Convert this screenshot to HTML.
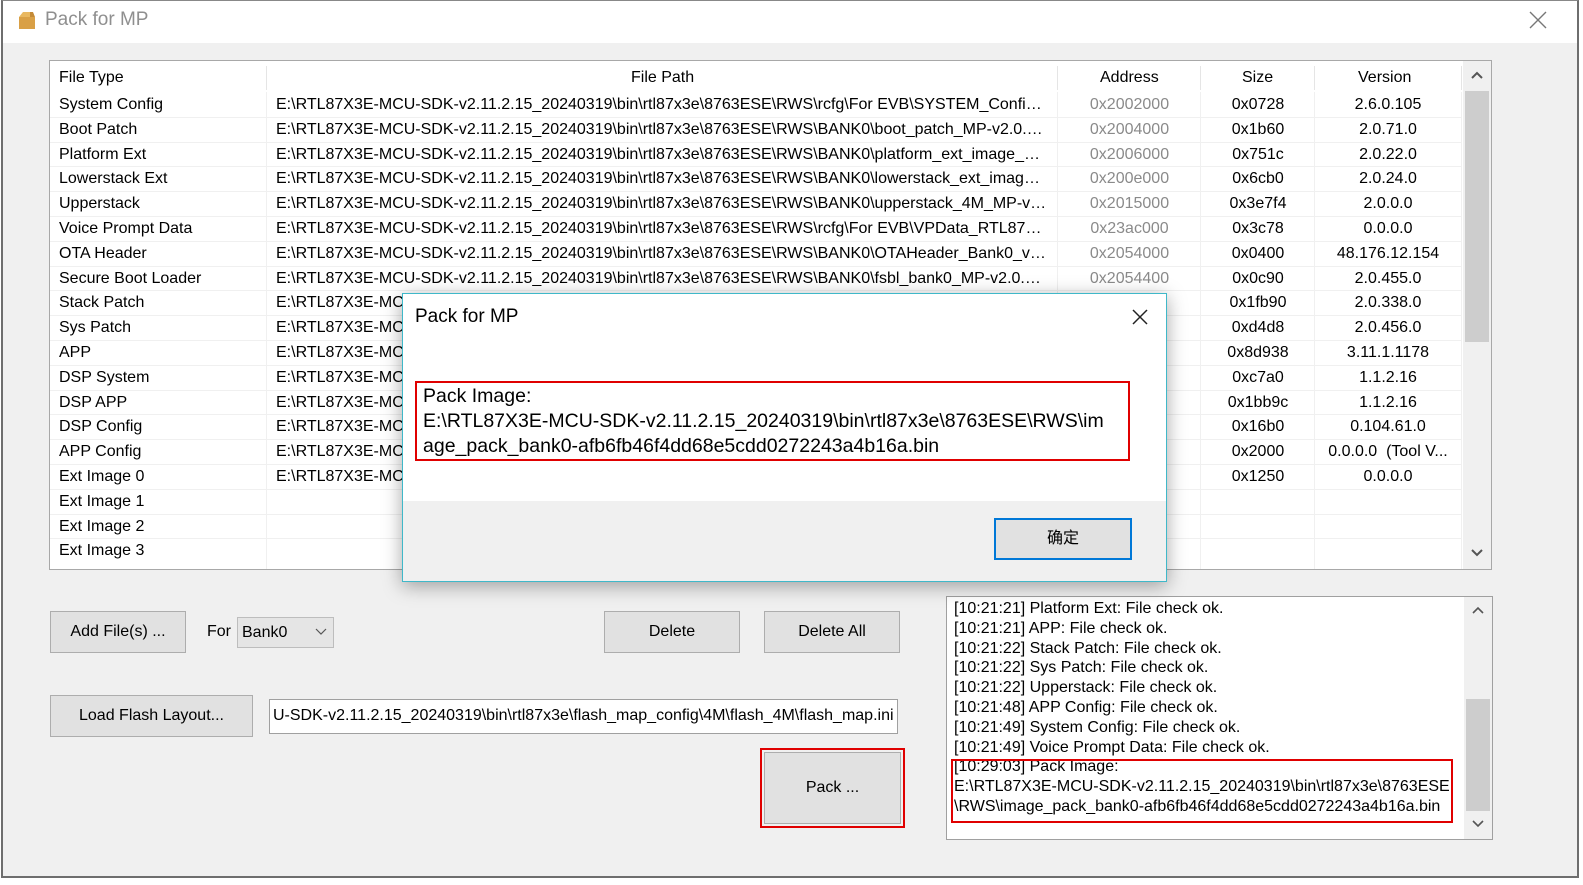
<!DOCTYPE html>
<html style="width:1583px;height:885px;overflow:hidden"><head><meta charset="utf-8"><style>
*{margin:0;padding:0;box-sizing:border-box}
body{width:1583px;height:885px;background:#fff;position:relative;overflow:hidden;font-family:"Liberation Sans","Noto Sans CJK SC",sans-serif;font-size:16px;color:#000}
.a{position:absolute}
#win{left:1px;top:0;width:1578px;height:878px;border:2px solid #6e6e6e;border-top:1px solid #888;background:#f0f0f0;overflow:hidden}
#title{left:0;top:0;width:1574px;height:42px;background:#fff}
.row{position:absolute;left:0;height:24.8px;width:1412px;border-bottom:1px solid #f0f0f0;line-height:24px;white-space:nowrap;overflow:hidden}
.row span{position:absolute;top:0;overflow:hidden;text-overflow:ellipsis}
.c1{left:9px;width:205px}.c2{left:226px;width:772px}.c3{left:1008px;width:143px;text-align:center;color:#8a8a8a}.c4{left:1151px;width:114px;text-align:center}.c5{left:1265px;width:146px;text-align:center}
.btn{position:absolute;background:#e1e1e1;border:1px solid #adadad;text-align:center;font-size:16px}
.log div{height:19.8px;line-height:19.8px;white-space:nowrap}
</style></head><body>
<div id="win" class="a">
 <div id="title" class="a"></div>
</div>
<svg class="a" style="left:17px;top:10px" width="20" height="20" viewBox="0 0 20 20"><path d="M2 7 L18 7 L18 19 L2 19Z" fill="#d9a046"/><path d="M2 7 L6 2 L13 2 L13 7Z" fill="#e9b860"/><path d="M13 2 L16 2 L18 7 L13 7Z" fill="#c48a36"/></svg>
<div class="a" style="left:45px;top:9px;font-size:19px;color:#8f8f8f">Pack for MP</div>
<svg class="a" style="left:1529px;top:11px" width="18" height="18"><path d="M1 1L17 17M17 1L1 17" stroke="#777" stroke-width="1.4"/></svg>

<div class="a" style="left:49px;top:60px;width:1443px;height:510px;border:1px solid #a8a8a8;background:#fff;overflow:hidden">
 <div class="a" style="left:0;top:5px;width:1412px;height:26px;line-height:24px">
  <span class="a" style="left:9px">File Type</span>
  <span class="a" style="left:216px;top:0;height:24px;border-left:1px solid #e5e5e5"></span>
  <span class="a" style="left:581px">File Path</span>
  <span class="a" style="left:1007px;top:0;height:24px;border-left:1px solid #e5e5e5"></span>
  <span class="a" style="left:1050px">Address</span>
  <span class="a" style="left:1150px;top:0;height:24px;border-left:1px solid #e5e5e5"></span>
  <span class="a" style="left:1192px">Size</span>
  <span class="a" style="left:1264px;top:0;height:24px;border-left:1px solid #e5e5e5"></span>
  <span class="a" style="left:1308px">Version</span>
  <span class="a" style="left:1411px;top:0;height:24px;border-left:1px solid #e5e5e5"></span>
 </div>
 <div class="a" style="left:216px;top:31px;height:478px;border-left:1px solid #f0f0f0"></div>
 <div class="a" style="left:1007px;top:31px;height:478px;border-left:1px solid #f0f0f0"></div>
 <div class="a" style="left:1150px;top:31px;height:478px;border-left:1px solid #f0f0f0"></div>
 <div class="a" style="left:1264px;top:31px;height:478px;border-left:1px solid #f0f0f0"></div>
 <div class="a" style="left:1411px;top:31px;height:478px;border-left:1px solid #f0f0f0"></div>
 <div class="row" style="top:32px"><span class="c1">System Config</span><span class="c2">E:\RTL87X3E-MCU-SDK-v2.11.2.15_20240319\bin\rtl87x3e\8763ESE\RWS\rcfg\For EVB\SYSTEM_Config_RWS_xxxx.bin</span><span class="c3">0x2002000</span><span class="c4">0x0728</span><span class="c5">2.6.0.105</span></div>
 <div class="row" style="top:56.8px"><span class="c1">Boot Patch</span><span class="c2">E:\RTL87X3E-MCU-SDK-v2.11.2.15_20240319\bin\rtl87x3e\8763ESE\RWS\BANK0\boot_patch_MP-v2.0.455.0.bin</span><span class="c3">0x2004000</span><span class="c4">0x1b60</span><span class="c5">2.0.71.0</span></div>
 <div class="row" style="top:81.6px"><span class="c1">Platform Ext</span><span class="c2">E:\RTL87X3E-MCU-SDK-v2.11.2.15_20240319\bin\rtl87x3e\8763ESE\RWS\BANK0\platform_ext_image_MP-v2.bin</span><span class="c3">0x2006000</span><span class="c4">0x751c</span><span class="c5">2.0.22.0</span></div>
 <div class="row" style="top:106.4px"><span class="c1">Lowerstack Ext</span><span class="c2">E:\RTL87X3E-MCU-SDK-v2.11.2.15_20240319\bin\rtl87x3e\8763ESE\RWS\BANK0\lowerstack_ext_image_4M.bin</span><span class="c3">0x200e000</span><span class="c4">0x6cb0</span><span class="c5">2.0.24.0</span></div>
 <div class="row" style="top:131.2px"><span class="c1">Upperstack</span><span class="c2">E:\RTL87X3E-MCU-SDK-v2.11.2.15_20240319\bin\rtl87x3e\8763ESE\RWS\BANK0\upperstack_4M_MP-v2.0.0.bin</span><span class="c3">0x2015000</span><span class="c4">0x3e7f4</span><span class="c5">2.0.0.0</span></div>
 <div class="row" style="top:156px"><span class="c1">Voice Prompt Data</span><span class="c2">E:\RTL87X3E-MCU-SDK-v2.11.2.15_20240319\bin\rtl87x3e\8763ESE\RWS\rcfg\For EVB\VPData_RTL8763ESE_xx.bin</span><span class="c3">0x23ac000</span><span class="c4">0x3c78</span><span class="c5">0.0.0.0</span></div>
 <div class="row" style="top:180.8px"><span class="c1">OTA Header</span><span class="c2">E:\RTL87X3E-MCU-SDK-v2.11.2.15_20240319\bin\rtl87x3e\8763ESE\RWS\BANK0\OTAHeader_Bank0_v48.176.bin</span><span class="c3">0x2054000</span><span class="c4">0x0400</span><span class="c5">48.176.12.154</span></div>
 <div class="row" style="top:205.6px"><span class="c1">Secure Boot Loader</span><span class="c2">E:\RTL87X3E-MCU-SDK-v2.11.2.15_20240319\bin\rtl87x3e\8763ESE\RWS\BANK0\fsbl_bank0_MP-v2.0.455.0.bin</span><span class="c3">0x2054400</span><span class="c4">0x0c90</span><span class="c5">2.0.455.0</span></div>
 <div class="row" style="top:230.4px"><span class="c1">Stack Patch</span><span class="c2">E:\RTL87X3E-MCU-SDK</span><span class="c4">0x1fb90</span><span class="c5">2.0.338.0</span></div>
 <div class="row" style="top:255.2px"><span class="c1">Sys Patch</span><span class="c2">E:\RTL87X3E-MCU-SDK</span><span class="c4">0xd4d8</span><span class="c5">2.0.456.0</span></div>
 <div class="row" style="top:280px"><span class="c1">APP</span><span class="c2">E:\RTL87X3E-MCU-SDK</span><span class="c4">0x8d938</span><span class="c5">3.11.1.1178</span></div>
 <div class="row" style="top:304.8px"><span class="c1">DSP System</span><span class="c2">E:\RTL87X3E-MCU-SDK</span><span class="c4">0xc7a0</span><span class="c5">1.1.2.16</span></div>
 <div class="row" style="top:329.6px"><span class="c1">DSP APP</span><span class="c2">E:\RTL87X3E-MCU-SDK</span><span class="c4">0x1bb9c</span><span class="c5">1.1.2.16</span></div>
 <div class="row" style="top:354.4px"><span class="c1">DSP Config</span><span class="c2">E:\RTL87X3E-MCU-SDK</span><span class="c4">0x16b0</span><span class="c5">0.104.61.0</span></div>
 <div class="row" style="top:379.2px"><span class="c1">APP Config</span><span class="c2">E:\RTL87X3E-MCU-SDK</span><span class="c4">0x2000</span><span class="c5">0.0.0.0 &nbsp;(Tool V...</span></div>
 <div class="row" style="top:404px"><span class="c1">Ext Image 0</span><span class="c2">E:\RTL87X3E-MCU-SDK</span><span class="c4">0x1250</span><span class="c5">0.0.0.0</span></div>
 <div class="row" style="top:428.8px"><span class="c1">Ext Image 1</span></div>
 <div class="row" style="top:453.6px"><span class="c1">Ext Image 2</span></div>
 <div class="row" style="top:478.4px;border:none"><span class="c1">Ext Image 3</span></div>
 <div class="a" style="left:1413px;top:0;width:28px;height:508px;background:#f0f0f0"></div>
 <div class="a" style="left:1415px;top:30px;width:24px;height:251px;background:#cdcdcd"></div>
 <svg class="a" style="left:1420px;top:9px" width="14" height="10"><path d="M2 8L7 3L12 8" stroke="#555" stroke-width="2" fill="none"/></svg>
 <svg class="a" style="left:1420px;top:487px" width="14" height="10"><path d="M2 2L7 7L12 2" stroke="#555" stroke-width="2" fill="none"/></svg>
</div>

<div class="btn" style="left:50px;top:611px;width:136px;height:42px;line-height:40px">Add File(s) ...</div>
<div class="a" style="left:207px;top:623px">For</div>
<div class="a" style="left:237px;top:617px;width:97px;height:31px;background:#e5e5e5;border:1px solid #bdbdbd;line-height:29px;padding-left:4px">Bank0</div>
<svg class="a" style="left:315px;top:627px" width="12" height="10"><path d="M1 2L6 7L11 2" stroke="#555" stroke-width="1.2" fill="none"/></svg>
<div class="btn" style="left:604px;top:611px;width:136px;height:42px;line-height:40px">Delete</div>
<div class="btn" style="left:764px;top:611px;width:136px;height:42px;line-height:40px">Delete All</div>
<div class="btn" style="left:50px;top:695px;width:203px;height:42px;line-height:40px">Load Flash Layout...</div>
<div class="a" style="left:269px;top:699px;width:629px;height:35px;background:#fff;border:1px solid #a0a0a0;line-height:31px;padding-left:3px;white-space:nowrap;overflow:hidden">U-SDK-v2.11.2.15_20240319\bin\rtl87x3e\flash_map_config\4M\flash_4M\flash_map.ini</div>
<div class="a" style="left:760px;top:748px;width:145px;height:80px;border:2px solid #e00000"></div>
<div class="btn" style="left:764px;top:752px;width:137px;height:72px;line-height:70px">Pack ...</div>

<div class="a log" style="left:946px;top:596px;width:547px;height:244px;background:#fff;border:1px solid #a0a0a0;padding:2px 0 0 7px;font-size:16px;overflow:hidden">
 <div>[10:21:21] Platform Ext: File check ok.</div>
 <div>[10:21:21] APP: File check ok.</div>
 <div>[10:21:22] Stack Patch: File check ok.</div>
 <div>[10:21:22] Sys Patch: File check ok.</div>
 <div>[10:21:22] Upperstack: File check ok.</div>
 <div>[10:21:48] APP Config: File check ok.</div>
 <div>[10:21:49] System Config: File check ok.</div>
 <div>[10:21:49] Voice Prompt Data: File check ok.</div>
 <div>[10:29:03] Pack Image:</div>
 <div>E:\RTL87X3E-MCU-SDK-v2.11.2.15_20240319\bin\rtl87x3e\8763ESE</div>
 <div>\RWS\image_pack_bank0-afb6fb46f4dd68e5cdd0272243a4b16a.bin</div>
 <div class="a" style="left:4px;top:162px;width:502px;height:64px;border:2px solid #e00000"></div>
 <div class="a" style="left:517px;top:0;width:28px;height:242px;background:#f0f0f0"></div>
 <div class="a" style="left:519px;top:102px;width:24px;height:112px;background:#cdcdcd"></div>
 <svg class="a" style="left:524px;top:8px" width="14" height="10"><path d="M2 8L7 3L12 8" stroke="#555" stroke-width="1.6" fill="none"/></svg>
 <svg class="a" style="left:524px;top:222px" width="14" height="10"><path d="M2 2L7 7L12 2" stroke="#555" stroke-width="1.6" fill="none"/></svg>
</div>

<div class="a" style="left:402px;top:293px;width:765px;height:289px;background:#fff;border:1px solid #3fb8c9;box-shadow:0 4px 18px rgba(0,0,0,0.35);overflow:hidden">
 <div class="a" style="left:12px;top:12px;font-size:19px">Pack for MP</div>
 <svg class="a" style="left:729px;top:15px" width="16" height="16"><path d="M1 1L15 15M15 1L1 15" stroke="#222" stroke-width="1.5"/></svg>
 <div class="a" style="left:12px;top:87px;width:715px;height:80px;border:2px solid #e00000"></div>
 <div class="a" style="left:20px;top:90px;font-size:19.5px;line-height:25px;white-space:nowrap">Pack Image:<br>E:\RTL87X3E-MCU-SDK-v2.11.2.15_20240319\bin\rtl87x3e\8763ESE\RWS\im<br>age_pack_bank0-afb6fb46f4dd68e5cdd0272243a4b16a.bin</div>
 <div class="a" style="left:0;top:207px;width:763px;height:80px;background:#f0f0f0"></div>
 <div class="a" style="left:591px;top:224px;width:138px;height:42px;background:#e1e1e1;border:2px solid #0078d7;text-align:center;line-height:38px;font-size:16px">确定</div>
</div>
</body></html>
